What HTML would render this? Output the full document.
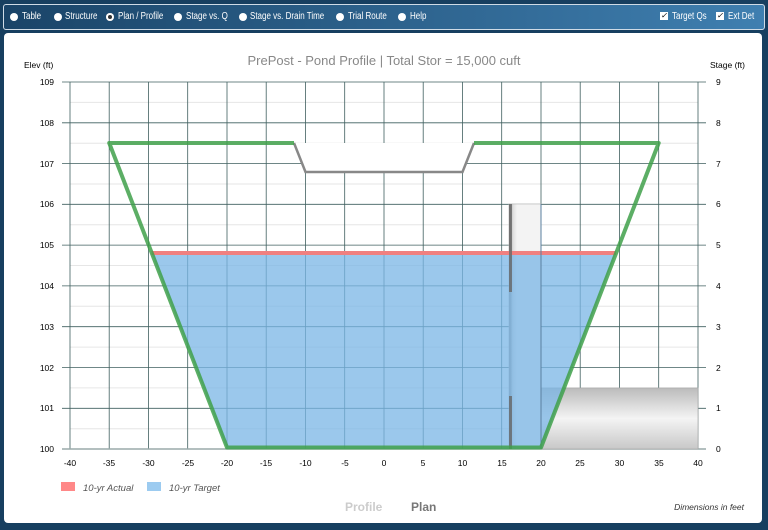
<!DOCTYPE html>
<html><head><style>
body{margin:0;width:768px;height:530px;background:#173f60;font-family:"Liberation Sans",sans-serif;overflow:hidden;position:relative}
.bar{position:absolute;left:3px;top:4px;width:760px;height:24px;border:1px solid #cfdbe6;border-radius:3px;background:linear-gradient(90deg,#1a4468,#3f7fb0);color:#fff;font-size:10px}
.rd{position:absolute;top:8px;width:8px;height:8px;border-radius:50%;background:#fff}
.rd.s{box-shadow:inset 0 0 0 2px #fff,inset 0 0 0 4px #333}
.cb{position:absolute;top:7px;width:8px;height:8px;background:#fff;color:#000;font-size:8px;line-height:8px;text-align:center}
.t{position:absolute;top:6px;white-space:nowrap;transform:scaleX(0.8);transform-origin:left center}
.panel{position:absolute;left:4px;top:33px;width:758px;height:490px;background:#fff;border-radius:4px}
</style></head><body>
<div class="bar">
<i class="rd" style="left:6px"></i><span class="t" style="left:18px">Table</span>
<i class="rd" style="left:50px"></i><span class="t" style="left:61px">Structure</span>
<i class="rd s" style="left:102px"></i><span class="t" style="left:114px">Plan / Profile</span>
<i class="rd" style="left:170px"></i><span class="t" style="left:182px">Stage vs. Q</span>
<i class="rd" style="left:235px"></i><span class="t" style="left:246px">Stage vs. Drain Time</span>
<i class="rd" style="left:332px"></i><span class="t" style="left:344px">Trial Route</span>
<i class="rd" style="left:394px"></i><span class="t" style="left:406px">Help</span>
<i class="cb" style="left:656px">✓</i><span class="t" style="left:668px">Target Qs</span>
<i class="cb" style="left:712px">✓</i><span class="t" style="left:724px">Ext Det</span>
</div>
<div class="panel"></div>
<svg width="768" height="530" style="position:absolute;left:0;top:0" font-family="Liberation Sans" font-size="9">
<defs><linearGradient id="pg" x1="0" y1="0" x2="0" y2="1"><stop offset="0" stop-color="#bbb"/><stop offset="0.5" stop-color="#f4f4f4"/><stop offset="1" stop-color="#c8c8c8"/></linearGradient>
<linearGradient id="rg" x1="0" y1="0" x2="1" y2="0"><stop offset="0" stop-color="#777"/><stop offset="0.12" stop-color="#ddd"/><stop offset="0.25" stop-color="#f3f3f3"/></linearGradient></defs>
<text x="384" y="65" text-anchor="middle" font-size="13" fill="#888">PrePost - Pond Profile | Total Stor = 15,000 cuft</text>
<text x="24" y="68" font-size="8.5">Elev (ft)</text>
<text x="710" y="68" font-size="8.5">Stage (ft)</text>
<g stroke="#e6e6e6" stroke-width="1">
<line x1="70" x2="698" y1="102.4" y2="102.4"/><line x1="70" x2="698" y1="143.2" y2="143.2"/><line x1="70" x2="698" y1="184" y2="184"/><line x1="70" x2="698" y1="224.7" y2="224.7"/><line x1="70" x2="698" y1="265.5" y2="265.5"/><line x1="70" x2="698" y1="306.3" y2="306.3"/><line x1="70" x2="698" y1="347.1" y2="347.1"/><line x1="70" x2="698" y1="387.9" y2="387.9"/><line x1="70" x2="698" y1="428.7" y2="428.7"/>
</g>
<g stroke="#3f5f5f" stroke-width="0.8">
<line x1="62" x2="706" y1="82" y2="82"/><line x1="62" x2="706" y1="122.8" y2="122.8"/><line x1="62" x2="706" y1="163.6" y2="163.6"/><line x1="62" x2="706" y1="204.3" y2="204.3"/><line x1="62" x2="706" y1="245.1" y2="245.1"/><line x1="62" x2="706" y1="285.9" y2="285.9"/><line x1="62" x2="706" y1="326.7" y2="326.7"/><line x1="62" x2="706" y1="367.5" y2="367.5"/><line x1="62" x2="706" y1="408.3" y2="408.3"/>
<line x1="70" x2="70" y1="82" y2="449"/><line x1="109.2" x2="109.2" y1="82" y2="449"/><line x1="148.5" x2="148.5" y1="82" y2="449"/><line x1="187.7" x2="187.7" y1="82" y2="449"/><line x1="227" x2="227" y1="82" y2="449"/><line x1="266.2" x2="266.2" y1="82" y2="449"/><line x1="305.5" x2="305.5" y1="82" y2="449"/><line x1="344.7" x2="344.7" y1="82" y2="449"/><line x1="384" x2="384" y1="82" y2="449"/><line x1="423.2" x2="423.2" y1="82" y2="449"/><line x1="462.5" x2="462.5" y1="82" y2="449"/><line x1="501.7" x2="501.7" y1="82" y2="449"/><line x1="541" x2="541" y1="82" y2="449"/><line x1="580.2" x2="580.2" y1="82" y2="449"/><line x1="619.5" x2="619.5" y1="82" y2="449"/><line x1="658.7" x2="658.7" y1="82" y2="449"/><line x1="698" x2="698" y1="82" y2="449"/>
</g>
<line x1="62" x2="706" y1="449" y2="449" stroke="#9aaaaa" stroke-width="1.5"/>
<g text-anchor="end" font-size="8.5">
<text x="54" y="85">109</text><text x="54" y="126">108</text><text x="54" y="167">107</text><text x="54" y="207">106</text><text x="54" y="248">105</text><text x="54" y="289">104</text><text x="54" y="330">103</text><text x="54" y="371">102</text><text x="54" y="411">101</text><text x="54" y="452">100</text>
</g>
<g font-size="8.5">
<text x="716" y="85">9</text><text x="716" y="126">8</text><text x="716" y="167">7</text><text x="716" y="207">6</text><text x="716" y="248">5</text><text x="716" y="289">4</text><text x="716" y="330">3</text><text x="716" y="371">2</text><text x="716" y="411">1</text><text x="716" y="452">0</text>
</g>
<g text-anchor="middle" font-size="8.5">
<text x="70" y="466">-40</text><text x="109" y="466">-35</text><text x="148.5" y="466">-30</text><text x="188" y="466">-25</text><text x="227" y="466">-20</text><text x="266" y="466">-15</text><text x="305.5" y="466">-10</text><text x="345" y="466">-5</text><text x="384" y="466">0</text><text x="423" y="466">5</text><text x="462.5" y="466">10</text><text x="502" y="466">15</text><text x="541" y="466">20</text><text x="580" y="466">25</text><text x="619.5" y="466">30</text><text x="659" y="466">35</text><text x="698" y="466">40</text>
</g>
<rect x="541" y="388" width="157" height="61" fill="url(#pg)" stroke="#aaa" stroke-width="0.7"/>
<rect x="509" y="204" width="32" height="245" fill="url(#rg)" stroke="#bbb" stroke-width="0.7"/>
<polygon points="151.6,253 616,253 541,449 227,449" fill="#7ab6e6" fill-opacity="0.75"/>
<line x1="151.6" x2="616" y1="253" y2="253" stroke="#f08080" stroke-width="4"/>
<rect x="509" y="204" width="3" height="88" fill="#666" opacity="0.8"/>
<rect x="509" y="396" width="3" height="53" fill="#666" opacity="0.8"/>
<line x1="541" x2="541" y1="204" y2="449" stroke="#5a7f9f" stroke-width="1"/>
<polyline points="294,143 305.5,172 462.5,172 474,143" fill="#fff" stroke="#888" stroke-width="2.5"/>
<polyline points="294,143 109.2,143 227,447.5 541,447.5 658.7,143 474,143" fill="none" stroke="#3fa04a" stroke-width="4" stroke-opacity="0.85" stroke-linejoin="round"/>
<rect x="61" y="482" width="14" height="9" fill="#f88"/>
<text x="83" y="491" font-style="italic" font-size="9.5" fill="#555">10-yr Actual</text>
<rect x="147" y="482" width="14" height="9" fill="#9ccbf0"/>
<text x="169" y="491" font-style="italic" font-size="9.5" fill="#555">10-yr Target</text>
<text x="345" y="511" font-weight="bold" font-size="12" fill="#ccc">Profile</text>
<text x="411" y="511" font-weight="bold" font-size="12" fill="#777">Plan</text>
<text x="744" y="510" text-anchor="end" font-style="italic" font-size="8.5" fill="#333">Dimensions in feet</text>
</svg>
</body></html>
